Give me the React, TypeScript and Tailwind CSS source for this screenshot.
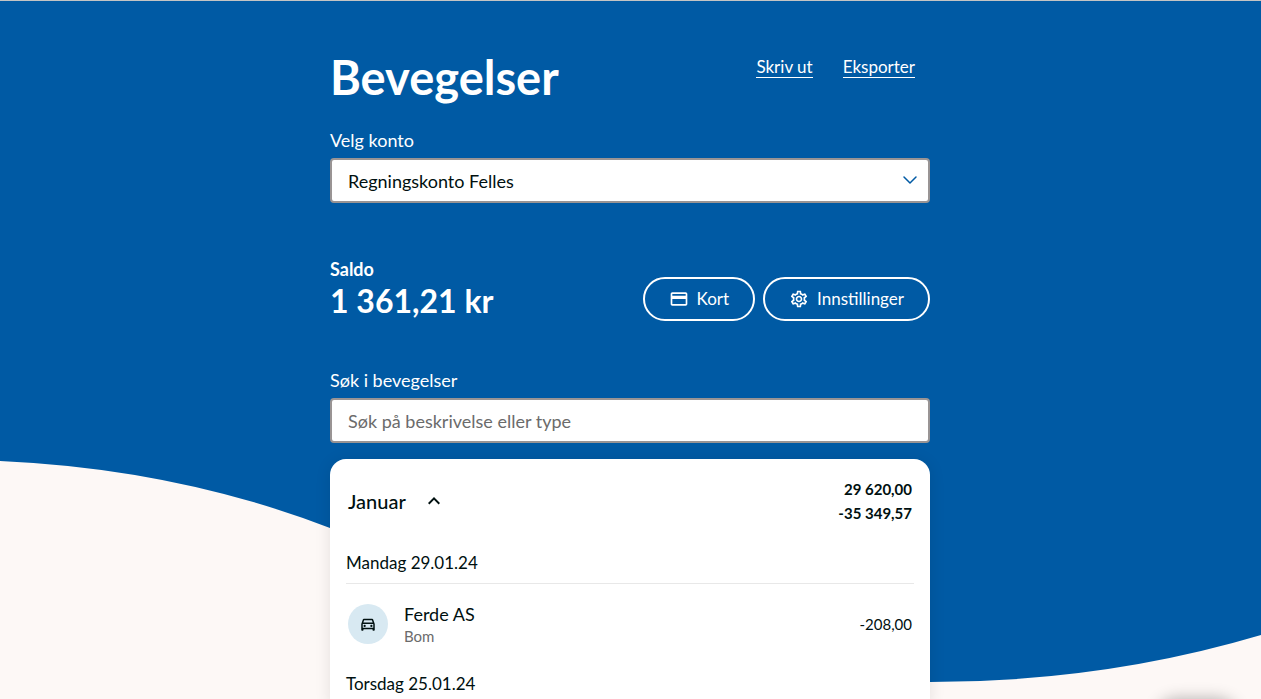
import { useState } from "react";
import { ChevronDown } from "lucide-react";
import {
  MdExpandLess,
  MdOutlineCreditCard,
  MdOutlineDirectionsCar,
  MdOutlineSettings,
} from "react-icons/md";

const accounts = ["Regningskonto Felles"];

const days = [
  { date: "Mandag 29.01.24", rows: [{ name: "Ferde AS", type: "Bom", amount: "-208,00" }] },
  { date: "Torsdag 25.01.24", rows: [] },
];

function Wave() {
  return (
    <svg
      className="absolute left-0 top-0 w-full h-screen"
      viewBox="0 0 1261 699"
      preserveAspectRatio="none"
      aria-hidden="true"
    >
      <path
        fill="#005aa4"
        d="M0 0V460Q177 468 330 527C530 600 700 681 930 681Q1103 681 1261 634V0Z"
      />
    </svg>
  );
}

export default function App() {
  const [open, setOpen] = useState(true);

  return (
    <div className="relative min-h-screen flex flex-col pr-px border-t border-[#c4c4c4] bg-[#fdf8f6] font-['Lato','Open_Sans',sans-serif] text-[17px] leading-6 text-[#001010]">
      <Wave />

      <main className="relative flex-1 flex flex-col w-full max-w-[600px] mx-auto pt-12">
        <header className="flex items-start justify-between text-white">
          <h1 className="text-[47px] leading-[56px] font-bold">Bevegelser</h1>
          <nav className="flex gap-[30px] pt-2 pr-[15px]">
            <a href="#print" className="leading-5 border-b border-white">Skriv ut</a>
            <a href="#export" className="leading-5 border-b border-white">Eksporter</a>
          </nav>
        </header>

        <label htmlFor="account" className="mt-[23px] text-lg leading-6 text-white">Velg konto</label>
        <div className="relative mt-1.5">
          <select
            id="account"
            className="w-full h-[45px] px-4 appearance-none rounded border-2 border-[#999494] bg-white text-lg leading-6"
          >
            {accounts.map((a) => (
              <option key={a}>{a}</option>
            ))}
          </select>
          <ChevronDown
            strokeWidth={1.5}
            className="absolute right-2 top-2.5 size-6 text-[#005aa4] pointer-events-none"
          />
        </div>

        <section className="flex items-end justify-between mt-[54px] text-white">
          <div>
            <h2 className="text-lg leading-6 font-bold">Saldo</h2>
            <p className="text-[32px] leading-10 font-bold">1 361,21 kr</p>
          </div>
          <div className="flex gap-2">
            <button type="button" className="flex items-center gap-2 h-11 px-6 rounded-full border-2 border-white">
              <MdOutlineCreditCard className="size-5" />
              Kort
            </button>
            <button type="button" className="flex items-center gap-2 h-11 px-6 rounded-full border-2 border-white">
              <MdOutlineSettings className="size-5" />
              Innstillinger
            </button>
          </div>
        </section>

        <label htmlFor="search" className="mt-[47px] text-lg leading-6 text-white">Søk i bevegelser</label>
        <input
          id="search"
          type="search"
          placeholder="Søk på beskrivelse eller type"
          className="w-full h-[45px] mt-1.5 px-4 rounded border-2 border-[#999494] bg-white text-lg leading-6 placeholder:text-[#6b6b6b]"
        />

        <section className="flex-1 mt-4 px-4 rounded-t-2xl bg-white shadow-[0_2px_16px_rgba(0,0,0,0.1)]">
          <div className="flex items-center justify-between px-[2px] pt-[18px]">
            <button
              type="button"
              aria-expanded={open}
              onClick={() => setOpen(!open)}
              className="flex items-center gap-4 text-xl leading-6 font-medium"
            >
              Januar
              <MdExpandLess className="size-6" />
            </button>
            <div className="text-[15px] leading-6 font-bold text-right">
              <p>29 620,00</p>
              <p>-35 349,57</p>
            </div>
          </div>

          {open && (
            <div className="flex flex-col gap-2 pt-[26px]">
              {days.map((d) => (
                <div key={d.date}>
                  <h3 className="pb-2 border-b border-[#e8e8e8]">{d.date}</h3>
                  {d.rows.map((r) => (
                    <div key={r.name} className="flex items-center gap-4 px-[2px] py-[18px]">
                      <span className="flex items-center justify-center size-10 rounded-full bg-[#d8e9f2]">
                        <MdOutlineDirectionsCar className="size-[18px]" />
                      </span>
                      <div className="flex-1">
                        <p className="text-lg leading-6">{r.name}</p>
                        <p className="text-[15px] leading-5 text-[#6b6b6b]">{r.type}</p>
                      </div>
                      <p className="text-[15px] leading-6">{r.amount}</p>
                    </div>
                  ))}
                </div>
              ))}
            </div>
          )}
        </section>
      </main>

      {/* top shadow of the chat launcher docked under the fold */}
      <div className="fixed right-6 top-full w-20 h-10 rounded-full shadow-[0_0_16px_rgba(0,0,0,0.3)]" />
    </div>
  );
}
